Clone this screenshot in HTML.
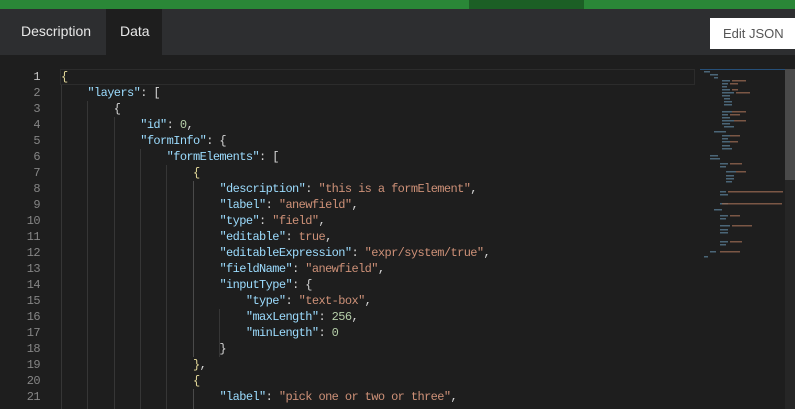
<!DOCTYPE html>
<html><head><meta charset="utf-8"><style>
*{margin:0;padding:0;box-sizing:border-box}
body{width:795px;height:409px;overflow:hidden;background:#1e1e1e;font-family:"Liberation Sans",sans-serif;position:relative}
.green{position:absolute;left:0;top:0;width:795px;height:9px;background:#2a8737}
.green i{position:absolute;left:469px;top:0;width:115px;height:9px;background:#1c5f25}
.tabs{position:absolute;left:0;top:9px;width:795px;height:46px;background:#2d2e30}
.tab{position:absolute;top:0;height:46px;line-height:44px;color:#e8e8e8;font-size:14px}
.btn{position:absolute;left:710px;top:9px;width:85px;height:31px;background:#fff;color:#555;font-size:13px;line-height:31px;padding-left:13px}
.ln{position:absolute;left:0;width:40px;text-align:right;font:12px/16px "Liberation Mono",monospace;color:#858585;letter-spacing:-0.6px}
.cl{position:absolute;left:61px;font:12px/16px "Liberation Mono",monospace;letter-spacing:-0.6px;color:#d4d4d4;white-space:pre}
.k{color:#9cdcfe}.s{color:#ce9178}.n{color:#b5cea8}.b{color:#e4d99a}
.g{position:absolute;width:1px;background:#363636}
.cur{position:absolute;left:60px;top:69px;width:635px;height:16px;border:1px solid #2c2c2c}
.mini{position:absolute;left:700px;top:69px;width:85px;height:190px}
.sb{position:absolute;left:785px;top:69px;width:10px;height:340px;background:#262626}
.sb i{position:absolute;left:0;top:0;width:10px;height:111px;background:#4a4a4a}
</style></head><body>
<div class="green"><i></i></div>
<div class="tabs">
<div class="tab" style="left:0;width:106px;padding-left:21px">Description</div>
<div class="tab" style="left:106px;width:56px;background:#1e1e1e;padding-left:14px">Data</div>
<div class="btn">Edit JSON</div>
</div>
<div class="cur"></div>
<div class="g" style="left:61px;top:85px;height:324px"></div>
<div class="g" style="left:87px;top:101px;height:308px"></div>
<div class="g" style="left:114px;top:117px;height:292px"></div>
<div class="g" style="left:140px;top:149px;height:260px"></div>
<div class="g" style="left:166px;top:165px;height:244px"></div>
<div class="g" style="left:193px;top:181px;height:176px;background:#4a4a4a"></div>
<div class="g" style="left:193px;top:389px;height:20px;background:#4a4a4a"></div>
<div class="g" style="left:219px;top:309px;height:48px"></div>

<div class="ln" style="top:69px;color:#c6c6c6">1</div>
<div class="ln" style="top:85px">2</div>
<div class="ln" style="top:101px">3</div>
<div class="ln" style="top:117px">4</div>
<div class="ln" style="top:133px">5</div>
<div class="ln" style="top:149px">6</div>
<div class="ln" style="top:165px">7</div>
<div class="ln" style="top:181px">8</div>
<div class="ln" style="top:197px">9</div>
<div class="ln" style="top:213px">10</div>
<div class="ln" style="top:229px">11</div>
<div class="ln" style="top:245px">12</div>
<div class="ln" style="top:261px">13</div>
<div class="ln" style="top:277px">14</div>
<div class="ln" style="top:293px">15</div>
<div class="ln" style="top:309px">16</div>
<div class="ln" style="top:325px">17</div>
<div class="ln" style="top:341px">18</div>
<div class="ln" style="top:357px">19</div>
<div class="ln" style="top:373px">20</div>
<div class="ln" style="top:389px">21</div>

<div class="cl" style="top:69px"><span class="b">{</span></div>
<div class="cl" style="top:85px">    <span class="k">"layers"</span>: [</div>
<div class="cl" style="top:101px">        {</div>
<div class="cl" style="top:117px">            <span class="k">"id"</span>: <span class="n">0</span>,</div>
<div class="cl" style="top:133px">            <span class="k">"formInfo"</span>: {</div>
<div class="cl" style="top:149px">                <span class="k">"formElements"</span>: [</div>
<div class="cl" style="top:165px">                    <span class="b">{</span></div>
<div class="cl" style="top:181px">                        <span class="k">"description"</span>: <span class="s">"this is a formElement"</span>,</div>
<div class="cl" style="top:197px">                        <span class="k">"label"</span>: <span class="s">"anewfield"</span>,</div>
<div class="cl" style="top:213px">                        <span class="k">"type"</span>: <span class="s">"field"</span>,</div>
<div class="cl" style="top:229px">                        <span class="k">"editable"</span>: <span class="s">true</span>,</div>
<div class="cl" style="top:245px">                        <span class="k">"editableExpression"</span>: <span class="s">"expr/system/true"</span>,</div>
<div class="cl" style="top:261px">                        <span class="k">"fieldName"</span>: <span class="s">"anewfield"</span>,</div>
<div class="cl" style="top:277px">                        <span class="k">"inputType"</span>: {</div>
<div class="cl" style="top:293px">                            <span class="k">"type"</span>: <span class="s">"text-box"</span>,</div>
<div class="cl" style="top:309px">                            <span class="k">"maxLength"</span>: <span class="n">256</span>,</div>
<div class="cl" style="top:325px">                            <span class="k">"minLength"</span>: <span class="n">0</span></div>
<div class="cl" style="top:341px">                        }</div>
<div class="cl" style="top:357px">                    <span class="b">}</span>,</div>
<div class="cl" style="top:373px">                    <span class="b">{</span></div>
<div class="cl" style="top:389px">                        <span class="k">"label"</span>: <span class="s">"pick one or two or three"</span>,</div>

<svg class="mini" viewBox="0 0 85 190" width="85" height="190">
<rect x="0" y="0" width="85" height="1" fill="#264f78"/>
<g fill="#5a7f96" opacity=".75">
<rect x="4" y="2" width="6" height="1.5"/><rect x="10" y="5" width="8" height="1.5"/><rect x="14" y="8" width="4" height="1.5"/>
<rect x="22" y="11" width="8" height="1.5"/><rect x="22" y="14" width="6" height="1.5"/><rect x="22" y="17" width="5" height="1.5"/>
<rect x="22" y="20" width="8" height="1.5"/><rect x="22" y="23" width="12" height="1.5"/><rect x="22" y="26" width="8" height="1.5"/>
<rect x="24" y="29" width="6" height="1.5"/><rect x="24" y="32" width="8" height="1.5"/><rect x="24" y="35" width="8" height="1.5"/>
<rect x="22" y="42" width="10" height="1.5"/><rect x="22" y="45" width="6" height="1.5"/><rect x="22" y="48" width="8" height="1.5"/>
<rect x="22" y="51" width="12" height="1.5"/><rect x="22" y="54" width="8" height="1.5"/><rect x="24" y="57" width="10" height="1.5"/>
<rect x="14" y="62" width="12" height="1.5"/><rect x="22" y="66" width="8" height="1.5"/><rect x="22" y="69" width="6" height="1.5"/>
<rect x="22" y="72" width="8" height="1.5"/><rect x="22" y="76" width="8" height="1.5"/><rect x="22" y="79" width="10" height="1.5"/>
<rect x="10" y="86" width="8" height="1.5"/><rect x="10" y="89" width="10" height="1.5"/><rect x="20" y="94" width="8" height="1.5"/>
<rect x="20" y="97" width="6" height="1.5"/><rect x="26" y="102" width="10" height="1.5"/><rect x="26" y="106" width="8" height="1.5"/>
<rect x="26" y="109" width="8" height="1.5"/><rect x="26" y="112" width="6" height="1.5"/><rect x="20" y="122" width="6" height="1.5"/>
<rect x="20" y="125" width="8" height="1.5"/><rect x="20" y="134" width="8" height="1.5"/><rect x="14" y="140" width="8" height="1.5"/>
<rect x="20" y="146" width="8" height="1.5"/><rect x="20" y="149" width="6" height="1.5"/><rect x="20" y="156" width="10" height="1.5"/>
<rect x="20" y="160" width="8" height="1.5"/><rect x="20" y="163" width="8" height="1.5"/><rect x="20" y="172" width="8" height="1.5"/>
<rect x="20" y="175" width="6" height="1.5"/><rect x="10" y="182" width="6" height="1.5"/><rect x="4" y="187" width="4" height="1.5"/>
</g>
<g fill="#9a6a52" opacity=".75">
<rect x="32" y="11" width="14" height="1.5"/><rect x="30" y="14" width="8" height="1.5"/><rect x="36" y="23" width="14" height="1.5"/>
<rect x="32" y="20" width="6" height="1.5"/><rect x="32" y="42" width="14" height="1.5"/><rect x="34" y="51" width="12" height="1.5"/>
<rect x="30" y="45" width="10" height="1.5"/><rect x="30" y="66" width="10" height="1.5"/><rect x="30" y="72" width="8" height="1.5"/>
<rect x="30" y="94" width="12" height="1.5"/><rect x="36" y="102" width="10" height="1.5"/><rect x="28" y="122" width="55" height="1.5"/>
<rect x="22" y="134" width="60" height="1.5"/><rect x="30" y="146" width="10" height="1.5"/><rect x="32" y="156" width="20" height="1.5"/>
<rect x="30" y="172" width="12" height="1.5"/><rect x="20" y="182" width="20" height="1.5"/>
</g>
</svg>
<div class="sb"><i></i></div>
</body></html>
